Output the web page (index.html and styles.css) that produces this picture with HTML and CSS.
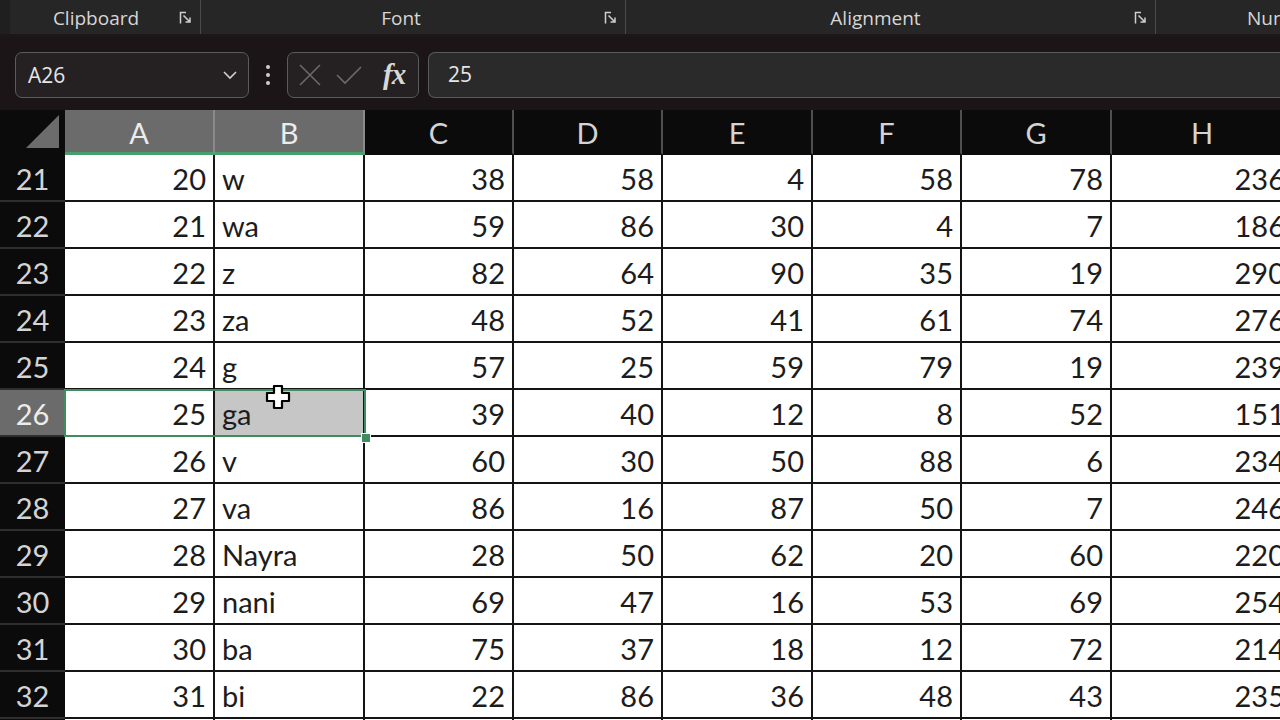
FILE: index.html
```html
<!DOCTYPE html>
<html>
<head>
<meta charset="utf-8">
<link rel="stylesheet" href="styles.css">
</head>
<body>
<div class="ribbon">
  <div class="grp g1"><span class="glabel">Clipboard</span><span class="launch"><svg width="14" height="14" viewBox="0 0 14 14"><path d="M1.5 12.5V1.5H7" fill="none" stroke="#cfcfcf" stroke-width="1.5"/><path d="M4.5 4.5L11 11M11 6.5V11H6.5" fill="none" stroke="#cfcfcf" stroke-width="1.5"/></svg></span></div>
  <div class="grp g2"><span class="glabel">Font</span><span class="launch"><svg width="14" height="14" viewBox="0 0 14 14"><path d="M1.5 12.5V1.5H7" fill="none" stroke="#cfcfcf" stroke-width="1.5"/><path d="M4.5 4.5L11 11M11 6.5V11H6.5" fill="none" stroke="#cfcfcf" stroke-width="1.5"/></svg></span></div>
  <div class="grp g3"><span class="glabel">Alignment</span><span class="launch"><svg width="14" height="14" viewBox="0 0 14 14"><path d="M1.5 12.5V1.5H7" fill="none" stroke="#cfcfcf" stroke-width="1.5"/><path d="M4.5 4.5L11 11M11 6.5V11H6.5" fill="none" stroke="#cfcfcf" stroke-width="1.5"/></svg></span></div>
  <div class="grp g4"><span class="glabel">Number</span></div>
</div>
<div class="fbar">
  <div class="namebox"><span>A26</span><svg width="16" height="10" viewBox="0 0 16 10"><path d="M2 2L8 8L14 2" fill="none" stroke="#cfcfcf" stroke-width="1.6"/></svg></div>
  <div class="dots"><i></i><i></i><i></i></div>
  <div class="fxbox">
    <svg width="26" height="26" viewBox="0 0 26 26"><path d="M3 3L23 23M23 3L3 23" stroke="#6a6a6a" stroke-width="1.6"/></svg>
    <svg width="28" height="26" viewBox="0 0 28 26"><path d="M2 13L10 21L26 5" fill="none" stroke="#6a6a6a" stroke-width="1.6"/></svg>
    <span class="fx">fx</span>
  </div>
  <div class="finput">25</div>
</div>
<div class="sheet">
  <div class="corner"><svg width="40" height="40" viewBox="0 0 40 40"><path d="M36 4V37H3Z" fill="#6c6c6c"/></svg></div>
  <div class="ch sel">A</div><div class="ch sel">B</div><div class="ch">C</div><div class="ch">D</div><div class="ch">E</div><div class="ch">F</div><div class="ch">G</div><div class="ch">H</div>

  <div class="rh">21</div><div class="c n">20</div><div class="c t">w</div><div class="c n">38</div><div class="c n">58</div><div class="c n">4</div><div class="c n">58</div><div class="c n">78</div><div class="c n">236</div>
  <div class="rh">22</div><div class="c n">21</div><div class="c t">wa</div><div class="c n">59</div><div class="c n">86</div><div class="c n">30</div><div class="c n">4</div><div class="c n">7</div><div class="c n">186</div>
  <div class="rh">23</div><div class="c n">22</div><div class="c t">z</div><div class="c n">82</div><div class="c n">64</div><div class="c n">90</div><div class="c n">35</div><div class="c n">19</div><div class="c n">290</div>
  <div class="rh">24</div><div class="c n">23</div><div class="c t">za</div><div class="c n">48</div><div class="c n">52</div><div class="c n">41</div><div class="c n">61</div><div class="c n">74</div><div class="c n">276</div>
  <div class="rh">25</div><div class="c n">24</div><div class="c t">g</div><div class="c n">57</div><div class="c n">25</div><div class="c n">59</div><div class="c n">79</div><div class="c n">19</div><div class="c n">239</div>
  <div class="rh rsel">26</div><div class="c n">25</div><div class="c t shade">ga</div><div class="c n">39</div><div class="c n">40</div><div class="c n">12</div><div class="c n">8</div><div class="c n">52</div><div class="c n">151</div>
  <div class="rh">27</div><div class="c n">26</div><div class="c t">v</div><div class="c n">60</div><div class="c n">30</div><div class="c n">50</div><div class="c n">88</div><div class="c n">6</div><div class="c n">234</div>
  <div class="rh">28</div><div class="c n">27</div><div class="c t">va</div><div class="c n">86</div><div class="c n">16</div><div class="c n">87</div><div class="c n">50</div><div class="c n">7</div><div class="c n">246</div>
  <div class="rh">29</div><div class="c n">28</div><div class="c t">Nayra</div><div class="c n">28</div><div class="c n">50</div><div class="c n">62</div><div class="c n">20</div><div class="c n">60</div><div class="c n">220</div>
  <div class="rh">30</div><div class="c n">29</div><div class="c t">nani</div><div class="c n">69</div><div class="c n">47</div><div class="c n">16</div><div class="c n">53</div><div class="c n">69</div><div class="c n">254</div>
  <div class="rh">31</div><div class="c n">30</div><div class="c t">ba</div><div class="c n">75</div><div class="c n">37</div><div class="c n">18</div><div class="c n">12</div><div class="c n">72</div><div class="c n">214</div>
  <div class="rh">32</div><div class="c n">31</div><div class="c t">bi</div><div class="c n">22</div><div class="c n">86</div><div class="c n">36</div><div class="c n">48</div><div class="c n">43</div><div class="c n">235</div>
  <div class="rh">33</div><div class="c n"></div><div class="c t"></div><div class="c n"></div><div class="c n"></div><div class="c n"></div><div class="c n"></div><div class="c n"></div><div class="c n"></div>

  <div class="selbox"></div>
  <div class="handle"></div>
  <svg class="cursor" width="26" height="26" viewBox="0 0 26 26"><path d="M9 2H17V9H24V17H17V24H9V17H2V9H9Z" fill="#ffffff" stroke="#000000" stroke-width="2.2" stroke-linejoin="round"/></svg>
</div>
</body>
</html>
```
FILE: styles.css
```css
html, body {
  margin: 0;
  padding: 0;
}
body {
  width: 1280px;
  height: 720px;
  overflow: hidden;
  background: #1b1518;
  font-family: "Open Sans", "Noto Sans", sans-serif;
}
.ribbon {
  height: 34px;
  background: #262626;
  display: flex;
  border-bottom: 3px solid #1e1719;
  box-sizing: content-box;
  overflow: hidden;
}
.grp {
  position: relative;
  flex-shrink: 0;
  display: flex;
  align-items: center;
  justify-content: center;
  height: 34px;
  border-right: 1px solid #4a4a4a;
  box-sizing: border-box;
}
.g1 { width: 201px; border-left: 10px solid #1f1f1f; padding-right: 18px; }
.g2 { width: 425px; padding-right: 24px; }
.g3 { width: 530px; padding-right: 30px; }
.g4 { width: 200px; border-right: none; justify-content: flex-start; padding-left: 91px; }
.glabel {
  color: #d6d6d6;
  font-size: 19px;
  font-weight: 500;
  line-height: 34px;
  padding-top: 2px;
}
.launch {
  position: absolute;
  right: 7px;
  top: 11px;
  width: 14px;
  height: 14px;
  display: flex;
}
.fbar {
  height: 73px;
  display: flex;
  align-items: flex-start;
  padding: 15px 0 0 15px;
  box-sizing: border-box;
}
.namebox {
  width: 234px;
  height: 46px;
  box-sizing: border-box;
  border: 1.5px solid #5b5b5b;
  border-radius: 7px;
  background: #252022;
  display: flex;
  align-items: center;
  justify-content: space-between;
  padding: 0 10px 0 12px;
  color: #e6e6e6;
  font-size: 21px;
}
.dots {
  width: 38px;
  height: 46px;
  display: flex;
  flex-direction: column;
  align-items: center;
  justify-content: center;
  gap: 4px;
}
.dots i {
  display: block;
  width: 4px;
  height: 4px;
  border-radius: 2px;
  background: #cfcfcf;
}
.fxbox {
  width: 132px;
  height: 46px;
  box-sizing: border-box;
  border: 1.5px solid #5b5b5b;
  border-radius: 7px;
  background: #252022;
  display: flex;
  align-items: center;
  gap: 12px;
  padding-left: 9px;
}
.fx {
  color: #d8d8d8;
  font-family: "Liberation Serif", "DejaVu Serif", serif;
  font-style: italic;
  font-weight: bold;
  font-size: 29px;
  margin-left: 8px;
  letter-spacing: -1px;
  margin-top: -2px;
}
.finput {
  margin-left: 9px;
  flex: 1;
  height: 46px;
  box-sizing: border-box;
  border: 1.5px solid #5b5b5b;
  border-right: none;
  border-radius: 7px 0 0 7px;
  background: #2a2a2a;
  color: #e6e6e6;
  font-size: 21px;
  line-height: 43px;
  padding-left: 19px;
}
.sheet {
  position: relative;
  display: grid;
  grid-template-columns: 65px 150px 150px 149px 149px 150px 149px 150px 182px;
  grid-template-rows: 45px repeat(12, 47px) 20px;
  height: 610px;
  overflow: hidden;
  font-family: Lato, "Open Sans", sans-serif;
  font-size: 29px;
}
.corner {
  background: #0b0b0b;
  display: flex;
  align-items: flex-end;
  justify-content: flex-end;
  padding: 0 2px 4px 0;
  box-sizing: border-box;
}
.ch {
  background: #0b0b0b;
  color: #d4d4d4;
  display: flex;
  align-items: center;
  justify-content: center;
  border-right: 2px solid #4f4f4f;
  border-bottom: 2px solid #0b0b0b;
  box-sizing: border-box;
  padding-top: 2px;
}
.ch.sel {
  background: #6b6b6b;
  color: #ececec;
  border-right-color: #8a8a8a;
  border-bottom: 3px solid #46a06c;
}
.rh {
  background: #0b0b0b;
  color: #d4d4d4;
  display: flex;
  align-items: center;
  justify-content: center;
  border-bottom: 2px solid #2e2e2e;
  box-sizing: border-box;
  padding-top: 2px;
}
.rh.rsel {
  background: #6b6b6b;
  color: #ececec;
}
.c {
  background: #ffffff;
  color: #1c1c1c;
  border-right: 2px solid #141414;
  border-bottom: 2px solid #141414;
  box-sizing: border-box;
  display: flex;
  align-items: center;
  white-space: nowrap;
  overflow: hidden;
  padding-top: 2px;
}
.n {
  justify-content: flex-end;
  padding-right: 7px;
}
.t {
  justify-content: flex-start;
  padding-left: 7px;
}
.shade {
  background: #c6c6c6;
}
.selbox {
  position: absolute;
  left: 64px;
  top: 279px;
  width: 302px;
  height: 48px;
  border: 2px solid #3f8c5e;
  box-sizing: border-box;
  pointer-events: none;
}
.handle {
  position: absolute;
  left: 361px;
  top: 323px;
  width: 8px;
  height: 8px;
  background: #3f8c5e;
  border: 1px solid #ffffff;
}
.cursor {
  position: absolute;
  left: 265px;
  top: 274px;
}
```
